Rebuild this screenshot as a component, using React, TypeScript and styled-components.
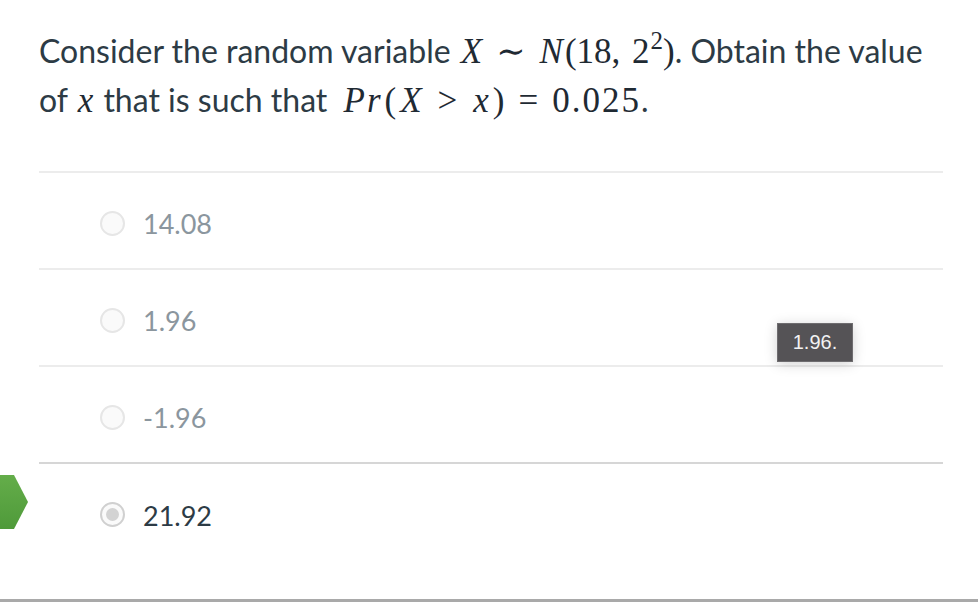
import styled, { createGlobalStyle } from "styled-components";

const GlobalStyle = createGlobalStyle`
  html, body {
    margin: 0;
    padding: 0;
    background: #fff;
  }
  body {
    font-family: Lato, "Open Sans", sans-serif;
    color: #2d3b45;
  }
`;

type Answer = {
  label: string;
  selected?: boolean;
};

const answers: Answer[] = [
  { label: "14.08" },
  { label: "1.96" },
  { label: "-1.96" },
  { label: "21.92", selected: true },
];

export default function App() {
  return (
    <Page>
      <GlobalStyle />
      <Question>
        Consider the random variable{" "}
        <Math>
          <I>X</I>
          <Op>∼</Op>
          <I>N</I>(18,<Thin /> 2<Sup>2</Sup>)
        </Math>
        . Obtain the value of{" "}
        <Math>
          <I>x</I>
        </Math>{" "}
        that is such that{" "}
        <Math $wide>
          <I>Pr</I>(<I>X</I>
          <Op>&gt;</Op>
          <I>x</I>)<Op>=</Op>0.025
        </Math>
        .
      </Question>

      <AnswerList>
        {answers.map((a) => (
          <AnswerRow key={a.label} $selected={a.selected}>
            <Radio $checked={a.selected} />
            <AnswerText $selected={a.selected}>{a.label}</AnswerText>
          </AnswerRow>
        ))}
      </AnswerList>

      <Footer />

      <Marker viewBox="0 0 28 54" aria-hidden>
        <defs>
          <linearGradient id="mk" x1="0" y1="0" x2="0" y2="1">
            <stop offset="0" stopColor="#64ad4a" />
            <stop offset="1" stopColor="#4f9a3a" />
          </linearGradient>
        </defs>
        <polygon points="0,0 14,0 28,27 14,54 0,54" fill="url(#mk)" />
      </Marker>

      <Tooltip>1.96.</Tooltip>
    </Page>
  );
}

const Page = styled.div`
  position: relative;
  width: 978px;
  height: 606px;
  overflow: hidden;
  display: flex;
  flex-direction: column;
`;

const Question = styled.p`
  margin: 26px 30px 0 39px;
  font-size: 32px;
  line-height: 49px;
  color: #2d3b45;
`;

const Math = styled.span<{ $wide?: boolean }>`
  font-family: "Liberation Serif", "DejaVu Serif", serif;
  font-size: 35px;
  line-height: 1;
  color: #1f2a33;
  letter-spacing: ${(p) => (p.$wide ? "2px" : "0")};
  margin-left: ${(p) => (p.$wide ? "6px" : "0")};
`;

const I = styled.i`
  font-style: italic;
  padding: 0 2px;
`;

const Op = styled.span`
  padding: 0 12px;
`;

const Thin = styled.span`
  display: inline-block;
  width: 3px;
`;

const Sup = styled.sup`
  font-size: 25px;
  vertical-align: 14px;
  line-height: 0;
  padding-left: 1px;
`;

const AnswerList = styled.div`
  margin: 47px 35px 0 39px;
  display: flex;
  flex-direction: column;
`;

const AnswerRow = styled.div<{ $selected?: boolean }>`
  height: ${(p) => (p.$selected ? "136px" : "97px")};
  border-top: 2px solid ${(p) => (p.$selected ? "#d6d6d6" : "#ececec")};
  display: flex;
  align-items: ${(p) => (p.$selected ? "flex-start" : "center")};
  padding-top: ${(p) => (p.$selected ? "38px" : "6px")};
  padding-left: 61px;
  gap: 18px;
  box-sizing: border-box;
`;

const Radio = styled.span<{ $checked?: boolean }>`
  width: 25px;
  height: 25px;
  flex: none;
  border-radius: 50%;
  box-sizing: border-box;
  border: 2px solid ${(p) => (p.$checked ? "#d0d0d0" : "#e6e6e6")};
  background: #fafafa;
  display: flex;
  align-items: center;
  justify-content: center;

  &::after {
    content: "";
    display: ${(p) => (p.$checked ? "block" : "none")};
    width: 13px;
    height: 13px;
    border-radius: 50%;
    background: #d3d3d3;
  }
`;

const AnswerText = styled.span<{ $selected?: boolean }>`
  font-size: 27px;
  line-height: 27px;
  color: ${(p) => (p.$selected ? "#2d3b45" : "#8b969e")};
`;

const Footer = styled.div`
  margin-top: auto;
  margin-bottom: 4px;
  height: 3px;
  background: #a9a9a9;
`;

const Marker = styled.svg`
  position: absolute;
  left: 0;
  top: 475px;
  width: 28px;
  height: 54px;
`;

const Tooltip = styled.div`
  position: absolute;
  left: 777px;
  top: 323px;
  width: 76px;
  height: 39px;
  box-sizing: border-box;
  background: #555356;
  border: 1px solid #6e6c6f;
  color: #f2f2f2;
  font-family: "Liberation Sans", Arial, sans-serif;
  font-size: 20px;
  display: flex;
  align-items: center;
  justify-content: center;
  box-shadow: 0 2px 12px rgba(0, 0, 0, 0.18);
`;
